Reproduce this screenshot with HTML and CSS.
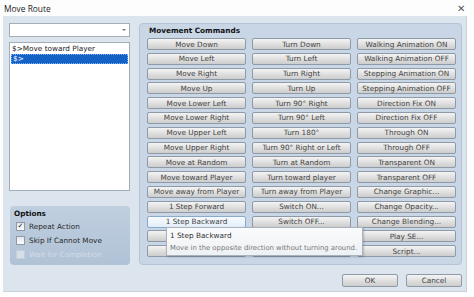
FILE: index.html
```html
<!DOCTYPE html>
<html lang="en">
<head>
  <meta charset="UTF-8" />
  <title>Move Route</title>
  <link rel="stylesheet" href="styles.css">
</head>
<body>
  <div class="window">
    <div class="titlebar">
      <span class="title">Move Route</span>
      <span class="close">&#x2715;</span>
    </div>
    <div class="client">
      <div class="main">
        <div class="left">
          <div class="combo"><span class="arrow"></span></div>
          <div class="list">
            <div class="item">$&gt;Move toward Player</div>
            <div class="item selected">$&gt;</div>
          </div>
          <div class="options">
            <div class="group-title">Options</div>
            <label class="check"><span class="box checked">&#x2713;</span>Repeat Action</label>
            <label class="check"><span class="box"></span>Skip If Cannot Move</label>
            <label class="check disabled"><span class="box"></span>Wait for Completion</label>
          </div>
        </div>

        <div class="commands">
          <div class="group-title">Movement Commands</div>
          <div class="grid">
            <button>Move Down</button>
            <button>Turn Down</button>
            <button>Walking Animation ON</button>
            <button>Move Left</button>
            <button>Turn Left</button>
            <button>Walking Animation OFF</button>
            <button>Move Right</button>
            <button>Turn Right</button>
            <button>Stepping Animation ON</button>
            <button>Move Up</button>
            <button>Turn Up</button>
            <button>Stepping Animation OFF</button>
            <button>Move Lower Left</button>
            <button>Turn 90° Right</button>
            <button>Direction Fix ON</button>
            <button>Move Lower Right</button>
            <button>Turn 90° Left</button>
            <button>Direction Fix OFF</button>
            <button>Move Upper Left</button>
            <button>Turn 180°</button>
            <button>Through ON</button>
            <button>Move Upper Right</button>
            <button>Turn 90° Right or Left</button>
            <button>Through OFF</button>
            <button>Move at Random</button>
            <button>Turn at Random</button>
            <button>Transparent ON</button>
            <button>Move toward Player</button>
            <button>Turn toward player</button>
            <button>Transparent OFF</button>
            <button>Move away from Player</button>
            <button>Turn away from Player</button>
            <button>Change Graphic...</button>
            <button>1 Step Forward</button>
            <button>Switch ON...</button>
            <button>Change Opacity...</button>
            <button class="hover">1 Step Backward</button>
            <button>Switch OFF...</button>
            <button>Change Blending...</button>
            <button></button>
            <button></button>
            <button>Play SE...</button>
            <button></button>
            <button></button>
            <button>Script...</button>
          </div>
          <div class="tooltip">
            <div class="tip-title">1 Step Backward</div>
            <div class="tip-text">Move in the opposite direction without turning around.</div>
          </div>
        </div>
      </div>
      <div class="actions">
        <button>OK</button>
        <button>Cancel</button>
      </div>
    </div>
  </div>
</body>
</html>
```

FILE: styles.css
```css
body {
  margin: 0;
  background: #f4f5f7;
  font-family: "DejaVu Sans", Verdana, sans-serif;
  font-size: 7.3px;
  color: #333;
}
.window {
  width: 474px;
  height: 297px;
  background: #fdfdfd;
  overflow: hidden;
}
.titlebar {
  height: 16px;
  display: flex;
  align-items: center;
  justify-content: space-between;
  padding: 0 9px 0 4px;
  font-family: "Open Sans", sans-serif;
  font-size: 8.4px;
  color: #222;
}
.close {
  font-size: 10px;
  color: #555;
}
.client {
  margin: 0 7px 0 3px;
  height: 276px;
  background: #dce4ee;
  border-right: 1px solid #c9d1da;
  border-bottom: 1px solid #c9d1da;
  padding: 7px 4px 0 6px;
  box-sizing: border-box;
}
.main {
  display: flex;
  gap: 9px;
}
.left {
  width: 121px;
  display: flex;
  flex-direction: column;
}
.combo {
  height: 14px;
  background: #fff;
  border: 1px solid #a2adba;
  box-sizing: border-box;
  position: relative;
}
.arrow {
  position: absolute;
  right: 3px;
  top: 5px;
  border-left: 2px solid transparent;
  border-right: 2px solid transparent;
  border-top: 2px solid #777;
}
.list {
  margin-top: 5px;
  height: 149px;
  background: #fff;
  border: 1px solid #a2adba;
  box-sizing: border-box;
  padding: 1px;
}
.item {
  height: 10px;
  line-height: 10px;
  padding-left: 1px;
  color: #222;
}
.item.selected {
  background: #1562c6;
  color: #fff;
  border: 1px dotted #7fb0ff;
  height: 8px;
  line-height: 8px;
}
.options {
  margin: 15px 0 0 1px;
  height: 59px;
  background: linear-gradient(#c0cfe0, #b0c2d6);
  border-radius: 4px;
  padding: 3px 4px;
  box-sizing: border-box;
}
.group-title {
  font-weight: bold;
  color: #111;
  height: 10px;
  line-height: 10px;
}
.check {
  display: flex;
  align-items: center;
  height: 14px;
  padding-left: 2px;
  gap: 4px;
  color: #2a2a2a;
}
.box {
  width: 7px;
  height: 7px;
  background: linear-gradient(#e4e8ee, #fafbfc);
  border: 1px solid #8f9aa7;
  font-size: 7px;
  line-height: 7px;
  text-align: center;
  color: #222;
}
.check.disabled {
  color: #d3dde8;
}
.check.disabled .box {
  border-color: #c4cfdb;
  background: #d6dfe9;
}
.commands {
  width: 323px;
  height: 242px;
  background: #c8d6e6;
  border: 1px solid #b4c4d6;
  border-radius: 4px;
  box-sizing: border-box;
  padding: 2px 5px 0 7px;
  position: relative;
}
.commands .group-title {
  padding-left: 2px;
  height: 12px;
}
.grid {
  display: grid;
  grid-template-columns: repeat(3, 99px);
  grid-auto-rows: 12px;
  column-gap: 6px;
  row-gap: 2.8px;
}
button {
  font-family: "DejaVu Sans", Verdana, sans-serif;
  font-size: 7.3px;
  color: #444;
  padding: 0;
  margin: 0;
  background: linear-gradient(#f4f4f4, #dedede 55%, #cdcdcd);
  border: 1px solid #8e9aa8;
  border-radius: 2px;
  white-space: nowrap;
  overflow: hidden;
}
button.hover {
  background: linear-gradient(#f6fafe, #e3eefa);
  border-color: #8aaacc;
}
.tooltip {
  position: absolute;
  left: 26px;
  top: 203px;
  width: 197px;
  height: 29px;
  background: linear-gradient(#fafbfc, #eef1f4);
  border: 1px solid #aab2bc;
  box-sizing: border-box;
  padding: 2px 3px;
  box-shadow: 1px 1px 2px rgba(0, 0, 0, 0.2);
}
.tip-title {
  color: #333;
  height: 12px;
  line-height: 12px;
}
.tip-text {
  color: #777;
  font-size: 6.85px;
  line-height: 12px;
  white-space: nowrap;
}
.actions {
  display: flex;
  justify-content: flex-end;
  gap: 8px;
  margin-top: 9px;
}
.actions button {
  width: 56px;
  height: 13px;
}
```
